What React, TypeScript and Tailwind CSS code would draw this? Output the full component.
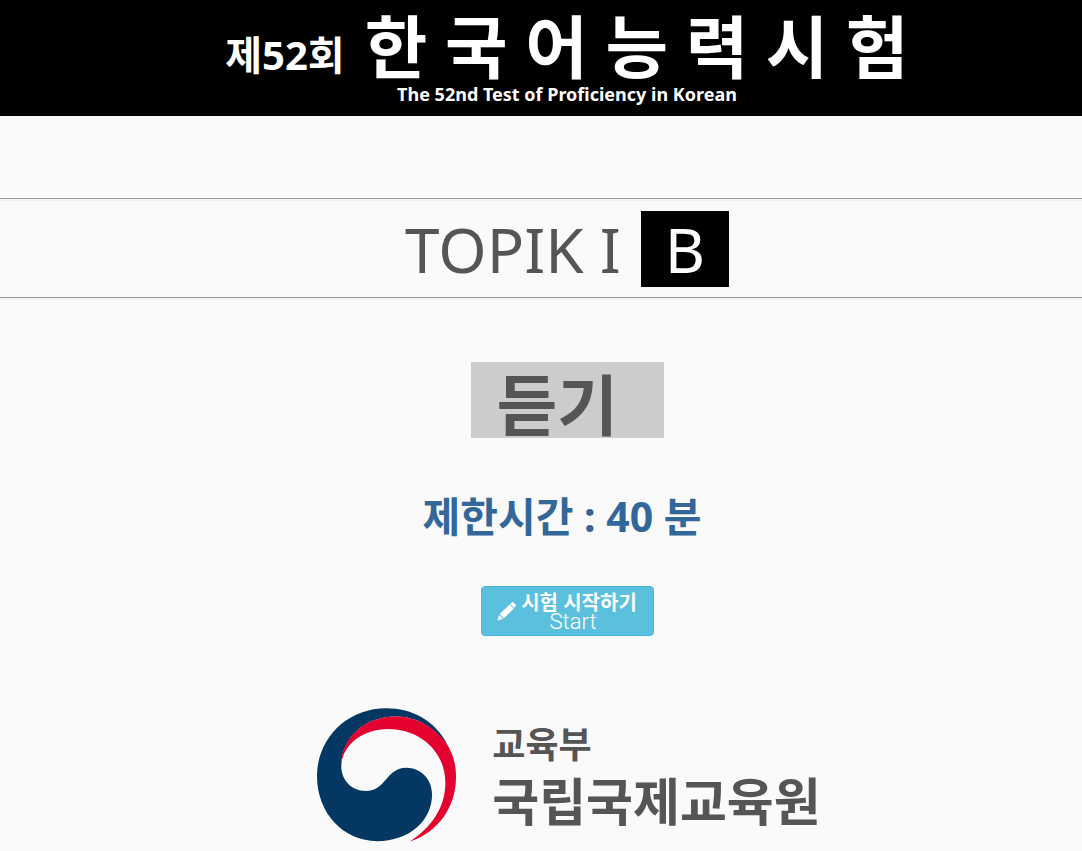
import type { ReactNode } from 'react';

interface RuleBandProps {
  children: ReactNode;
}

const PencilIcon = ({ className }: { className?: string }) => (
  <svg viewBox="0 0 18 18" fill="currentColor" className={className} aria-hidden="true">
    <path d="M13.2 1.3a1.2 1.2 0 0 1 1.7 0l1.8 1.8a1.2 1.2 0 0 1 0 1.7l-1.3 1.3-3.5-3.5z" />
    <path d="M11.4 3.1l3.7 3.7-8.8 8.8-3.9-3.9z" />
    <path d="M1.9 12.5l3.6 3.6L.4 17.6z" />
  </svg>
);

const TaegeukLogo = ({ className }: { className?: string }) => (
  <svg viewBox="54 38 418 402" className={className} role="img" aria-label="국립국제교육원">
    <path
      fill="#043762"
      d="M448 150C410 75 340 38 262 38C145 38 54 128 54 243C54 355 135 438 235 438C330 438 400 378 400 297C400 250 365 217 322 217C262 217 262 287 200 287C158 287 127 255 127 212C127 130 195 63 290 63C355 63 405 95 448 150Z"
    />
    <path
      fill="#e4002f"
      d="M127 212C125 130 195 63 290 63C355 63 405 95 440 140C462 170 472 205 472 245C472 335 420 410 332 440C400 395 440 335 440 262C440 170 365 101 268 101C190 101 130 150 127 212Z"
    />
  </svg>
);

const RuleBand = ({ children }: RuleBandProps) => (
  <div>
    <hr className="h-[3px] border-t border-b border-t-[#999999] border-b-[#eeeeee]" />
    {children}
    <hr className="h-[3px] border-t border-b border-t-[#999999] border-b-[#eeeeee]" />
  </div>
);

const Header = () => (
  <header className="bg-black pt-[10px] pb-3 pl-[52px] text-center font-bold text-white">
    <h1 className="flex items-center justify-center gap-5 whitespace-nowrap">
      <span className="pt-4 text-[40px] leading-[48px]">제52회</span>
      <span className="text-[68px] leading-[74px]">한 국 어 능 력 시 험</span>
    </h1>
    <p className="text-lg leading-5">The 52nd Test of Proficiency in Korean</p>
  </header>
);

export default function App() {
  return (
    <div className="min-h-screen overflow-hidden bg-[#fafafa] font-['Noto_Sans','Noto_Sans_CJK_KR',sans-serif] text-[#555555]">
      <Header />

      <main className="pt-[82px]">
        <RuleBand>
          <h2 className="flex items-center justify-center gap-5 py-[10px] pl-[52px] text-[62px] leading-[76px]">
            <span>TOPIK I</span>
            <span className="bg-black px-6 text-white">B</span>
          </h2>
        </RuleBand>

        <div className="flex flex-col items-center pt-[62px] pl-[52px]">
          <h3 className="w-[193px] bg-[#cccccc] pt-2 pl-[26px] text-[66px] leading-[68px] font-bold">듣기</h3>

          <p className="mt-12 pr-[10px] text-[41px] leading-[60px] font-bold text-[#336699]">제한시간 : 40 분</p>

          <button
            type="button"
            className="mt-10 flex h-[50px] w-[173px] items-center justify-center gap-1 rounded border border-[#46b8da] bg-[#5bc0de] text-white"
          >
            <PencilIcon className="size-5" />
            <span className="flex flex-col">
              <span className="pt-[2px] text-xl leading-5 font-bold">시험 시작하기</span>
              <span className="pr-3 font-['Roboto',sans-serif] text-[22px] leading-[18px] font-light">Start</span>
            </span>
          </button>

          <div className="mt-[72px] flex items-center gap-9 pl-1">
            <TaegeukLogo className="h-[134px] w-[139px]" />
            <div className="font-bold whitespace-nowrap">
              <p className="text-4xl leading-[52px]">교육부</p>
              <p className="text-[51px] leading-[60px]">국립국제교육원</p>
            </div>
          </div>
        </div>
      </main>
    </div>
  );
}
